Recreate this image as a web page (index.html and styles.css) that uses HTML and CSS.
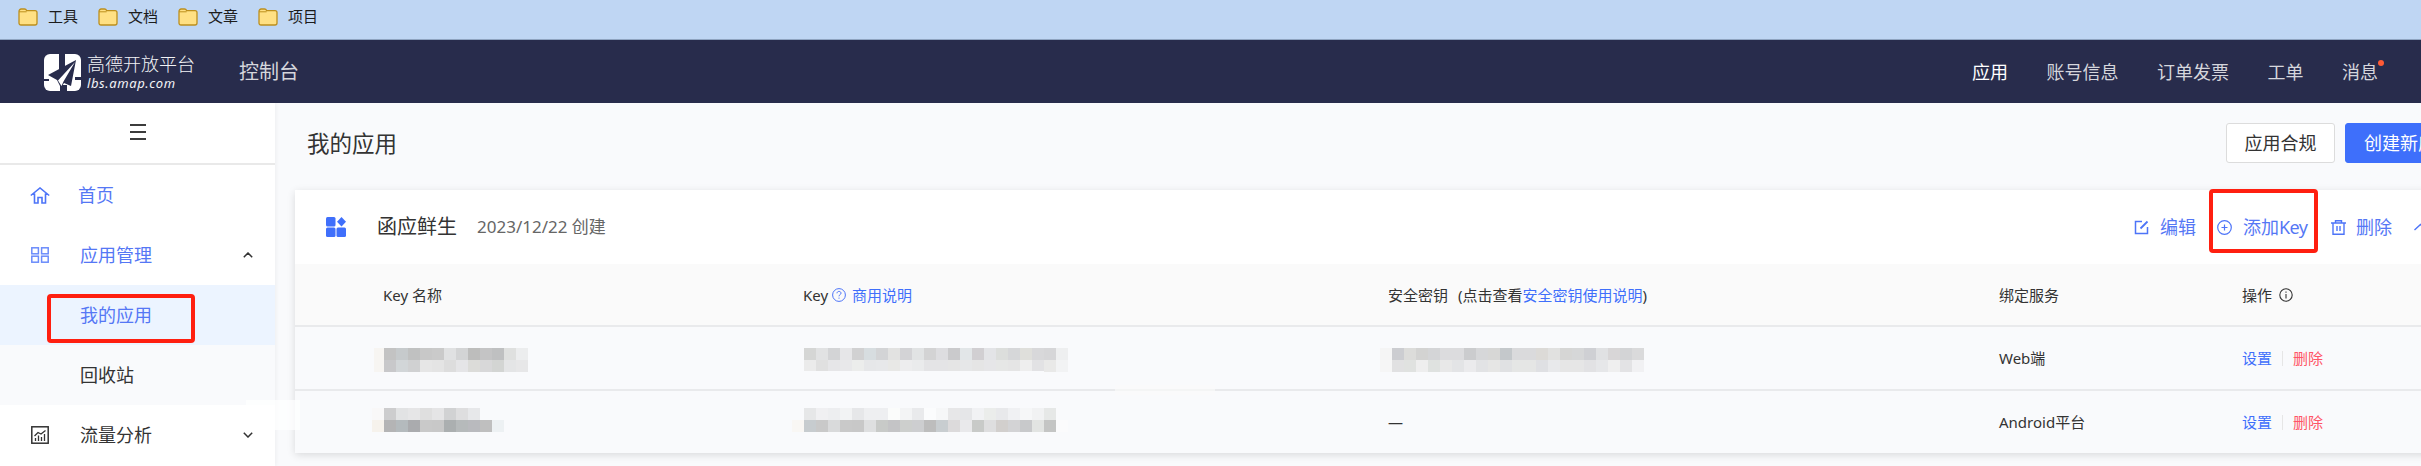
FILE: index.html
```html
<!DOCTYPE html>
<html lang="zh-CN">
<head>
<meta charset="utf-8">
<title>我的应用 - 高德开放平台</title>
<link rel="stylesheet" href="styles.css">
</head>
<body>
<div class="page">
  <div class="bookmarks">
    <a class="bm"><svg class="folder" viewBox="0 0 20 18"><path d="M1 3.5C1 2 2 1 3.2 1H6.5C7.6 1 8.2 1.6 8.6 2.6H17C18.2 2.6 19 3.4 19 4.6V15C19 16.2 18.2 17 17 17H3C1.8 17 1 16.2 1 15Z" fill="#ffe084" stroke="#bd8f1d" stroke-width="1.3"/><path d="M1 3.8H8.6" fill="none" stroke="#bd8f1d" stroke-width="1"/></svg><span class="bm-text">工具</span></a>
    <a class="bm"><svg class="folder" viewBox="0 0 20 18"><path d="M1 3.5C1 2 2 1 3.2 1H6.5C7.6 1 8.2 1.6 8.6 2.6H17C18.2 2.6 19 3.4 19 4.6V15C19 16.2 18.2 17 17 17H3C1.8 17 1 16.2 1 15Z" fill="#ffe084" stroke="#bd8f1d" stroke-width="1.3"/><path d="M1 3.8H8.6" fill="none" stroke="#bd8f1d" stroke-width="1"/></svg><span class="bm-text">文档</span></a>
    <a class="bm"><svg class="folder" viewBox="0 0 20 18"><path d="M1 3.5C1 2 2 1 3.2 1H6.5C7.6 1 8.2 1.6 8.6 2.6H17C18.2 2.6 19 3.4 19 4.6V15C19 16.2 18.2 17 17 17H3C1.8 17 1 16.2 1 15Z" fill="#ffe084" stroke="#bd8f1d" stroke-width="1.3"/><path d="M1 3.8H8.6" fill="none" stroke="#bd8f1d" stroke-width="1"/></svg><span class="bm-text">文章</span></a>
    <a class="bm"><svg class="folder" viewBox="0 0 20 18"><path d="M1 3.5C1 2 2 1 3.2 1H6.5C7.6 1 8.2 1.6 8.6 2.6H17C18.2 2.6 19 3.4 19 4.6V15C19 16.2 18.2 17 17 17H3C1.8 17 1 16.2 1 15Z" fill="#ffe084" stroke="#bd8f1d" stroke-width="1.3"/><path d="M1 3.8H8.6" fill="none" stroke="#bd8f1d" stroke-width="1"/></svg><span class="bm-text">项目</span></a>
  </div>

  <header class="topbar">
    <svg class="logo-mark" viewBox="0 0 37 37">
      <rect width="37" height="37" rx="6" fill="#fff"/>
      <rect x="15" y="0" width="6" height="15" fill="#282c4c"/>
      <rect x="31" y="23" width="6" height="3" fill="#282c4c"/>
      <rect x="0" y="25" width="5" height="2" fill="#282c4c"/>
      <rect x="16" y="31" width="7" height="6" fill="#282c4c"/>
      <path d="M32 6L4 21L13 26L17 34L20 29L27 32Z" fill="#282c4c"/>
      <path d="M31 8L14 26.500L17.500 32L19.500 27.500Z" fill="#fff"/>
    </svg>
    <div class="logo-text">
      <span class="logo-cn">高德开放平台</span>
      <span class="logo-en">lbs.amap.com</span>
    </div>
    <span class="console">控制台</span>
    <nav class="topnav">
      <a class="nav-on">应用</a>
      <a>账号信息</a>
      <a>订单发票</a>
      <a>工单</a>
      <a class="nav-msg">消息<i class="dot"></i></a>
    </nav>
  </header>

  <div class="body">
    <aside class="sidebar">
      <div class="burger"><span></span><span></span><span></span></div>
      <a class="mi mi-blue">
        <svg class="mi-ico home-ico" viewBox="0 0 20 17" fill="none" stroke="#4d74f8" stroke-width="1.600"><path d="M.8 8.500L10 1L19.200 8.500M4.500 6.500V16H8V10.500H12V16H15.500V6.500"/></svg>
        <span>首页</span>
      </a>
      <a class="mi mi-blue">
        <svg class="mi-ico" viewBox="0 0 18 16" fill="none" stroke="#6b8cfb" stroke-width="1.500"><rect x=".8" y=".8" width="6.600" height="6"/><rect x="10.600" y=".8" width="6.600" height="6"/><rect x=".8" y="9.200" width="6.600" height="6"/><rect x="10.600" y="9.200" width="6.600" height="6"/></svg>
        <span>应用管理</span>
        <svg class="chev" viewBox="0 0 10 6" fill="none" stroke="#333" stroke-width="1.500"><path d="M.8 5.200L5 1L9.200 5.200"/></svg>
      </a>
      <a class="mi sub sub-on"><span>我的应用</span></a>
      <a class="mi sub sub-off"><span>回收站</span></a>
      <a class="mi">
        <svg class="mi-ico" viewBox="0 0 18 18" fill="none" stroke="#333" stroke-width="1.500"><rect x=".8" y=".8" width="16.400" height="16.400"/><path d="M3.500 10L7 6.500L10 8L14.500 4.500M4.500 15V12M7.500 15V9.500M10.500 15V11M13.500 15V8" stroke-width="1.300"/></svg>
        <span>流量分析</span>
        <svg class="chev" viewBox="0 0 10 6" fill="none" stroke="#333" stroke-width="1.500"><path d="M.8 .8L5 5L9.200 .8"/></svg>
      </a>
    </aside>

    <main class="main">
      <div class="title-row">
        <h1 class="title">我的应用</h1>
        <div class="title-btns">
          <button class="btn">应用合规</button>
          <button class="btn btn-primary">创建新应用</button>
        </div>
      </div>

      <section class="card">
        <div class="card-head">
          <div class="head-left">
            <svg class="app-ico" viewBox="0 0 20 20" fill="#3f6ffb"><rect x="0" y="0" width="9.500" height="9.500" rx="1.500"/><path d="M15.500 0L20 4.750L15.500 9.500L11 4.750Z"/><rect x="0" y="10.500" width="9.500" height="9.500" rx="1.500"/><rect x="10.500" y="10.500" width="9.500" height="9.500" rx="1.500"/></svg>
            <span class="app-name">函应鲜生</span>
            <span class="app-date">2023/12/22 创建</span>
          </div>
          <div class="head-actions">
            <a class="act act-edit"><svg class="act-ico" viewBox="0 0 15 15" fill="none" stroke="#4d74f8" stroke-width="1.500"><path d="M8 1.500H1.500V13.500H13.500V7"/><path d="M6.500 8.500L13.500 1.500" stroke-width="1.800"/></svg>编辑</a>
            <a class="act act-add"><svg class="act-ico" viewBox="0 0 15 15" fill="none" stroke="#4d74f8" stroke-width="1.200"><circle cx="7.500" cy="7.500" r="6.800"/><path d="M7.500 4.500V10.500M4.500 7.500H10.500"/></svg><span class="add-text">添加<span class="add-key">Key</span></span></a>
            <a class="act act-del"><svg class="act-ico" viewBox="0 0 15 15" fill="none" stroke="#4d74f8" stroke-width="1.400"><path d="M0 3H15M4.500 3V.8H10.500V3M2 3V14.200H13V3M6 6V11M9 6V11"/></svg>删除</a>
            <a class="act act-fold"><svg class="act-ico" viewBox="0 0 15 15" fill="none" stroke="#4d74f8" stroke-width="1.400"><path d="M1.500 10L7.500 4.500L13.500 10"/></svg>收起</a>
          </div>
        </div>

        <div class="row row-head">
          <div>Key 名称</div>
          <div class="key-head">Key<svg class="help" viewBox="0 0 14 14" fill="none" stroke="#4d74f8" stroke-width="1"><circle cx="7" cy="7" r="6.400"/><path d="M5 5.300C5 4 6 3.400 7 3.400C8.100 3.400 9 4.100 9 5.200C9 6.700 7 6.600 7 8.300M7 9.600V10.700"/></svg><a class="link">商用说明</a></div>
          <div>安全密钥<span class="paren">(点击查看<a class="link">安全密钥使用说明</a>)</span></div>
          <div>绑定服务</div>
          <div class="op-head">操作<svg class="info" viewBox="0 0 14 14" fill="none" stroke="#333" stroke-width="1.100"><circle cx="7" cy="7" r="6.200"/><path d="M7 6V10.500M7 3.500V4.800"/></svg></div>
        </div>

        <div class="row">
          <div>
            <svg class="mosaic mos-a" width="154" height="24" viewBox="0 0 154 24">
              <rect x="0" y="0" width="10" height="12" fill="#f7f5f2"/><rect x="10" y="0" width="12" height="12" fill="#c3c3c3"/><rect x="22" y="0" width="12" height="12" fill="#c6cacc"/><rect x="34" y="0" width="12" height="12" fill="#c0c1c1"/><rect x="46" y="0" width="12" height="12" fill="#c8c8c8"/><rect x="58" y="0" width="12" height="12" fill="#cacaca"/><rect x="70" y="0" width="12" height="12" fill="#e0e1e2"/><rect x="82" y="0" width="12" height="12" fill="#d3d4d5"/><rect x="94" y="0" width="12" height="12" fill="#bdbdbc"/><rect x="106" y="0" width="12" height="12" fill="#c4c4c5"/><rect x="118" y="0" width="12" height="12" fill="#bfc0c1"/><rect x="130" y="0" width="12" height="12" fill="#dfe0df"/><rect x="142" y="0" width="12" height="12" fill="#ecedee"/>
              <rect x="0" y="12" width="10" height="12" fill="#f7f5f2"/><rect x="10" y="12" width="12" height="12" fill="#c8c8ca"/><rect x="22" y="12" width="12" height="12" fill="#d2d6d8"/><rect x="34" y="12" width="12" height="12" fill="#d0d1d2"/><rect x="46" y="12" width="12" height="12" fill="#e6e6e6"/><rect x="58" y="12" width="12" height="12" fill="#e4e4e4"/><rect x="70" y="12" width="12" height="12" fill="#dddddd"/><rect x="82" y="12" width="12" height="12" fill="#e5e5e7"/><rect x="94" y="12" width="12" height="12" fill="#dcdcd9"/><rect x="106" y="12" width="12" height="12" fill="#d8d8d9"/><rect x="118" y="12" width="12" height="12" fill="#d3d5d3"/><rect x="130" y="12" width="12" height="12" fill="#e4e5e6"/><rect x="142" y="12" width="12" height="12" fill="#e7e7e8"/>
            </svg>
          </div>
          <div>
            <svg class="mosaic mos-b" width="264" height="24" viewBox="0 0 264 24">
              <rect x="0" y="0" width="12" height="12" fill="#d5d6d5"/><rect x="12" y="0" width="12" height="12" fill="#e1e2e3"/><rect x="24" y="0" width="12" height="12" fill="#d3d4d6"/><rect x="36" y="0" width="12" height="12" fill="#e6e6e8"/><rect x="48" y="0" width="12" height="12" fill="#d1d1d2"/><rect x="60" y="0" width="12" height="12" fill="#d7dde0"/><rect x="72" y="0" width="12" height="12" fill="#d3d4d6"/><rect x="84" y="0" width="12" height="12" fill="#e2e2e1"/><rect x="96" y="0" width="12" height="12" fill="#d3d3d6"/><rect x="108" y="0" width="12" height="12" fill="#e1e3e4"/><rect x="120" y="0" width="12" height="12" fill="#d3d3d4"/><rect x="132" y="0" width="12" height="12" fill="#dddde0"/><rect x="144" y="0" width="12" height="12" fill="#cacacc"/><rect x="156" y="0" width="12" height="12" fill="#e2e6e8"/><rect x="168" y="0" width="12" height="12" fill="#d1cfd2"/><rect x="180" y="0" width="12" height="12" fill="#e3e4e7"/><rect x="192" y="0" width="12" height="12" fill="#dcdedc"/><rect x="204" y="0" width="12" height="12" fill="#d6d7d9"/><rect x="216" y="0" width="12" height="12" fill="#dfdfdb"/><rect x="228" y="0" width="12" height="12" fill="#d8d8da"/><rect x="240" y="0" width="12" height="12" fill="#d6d6d8"/><rect x="252" y="0" width="12" height="12" fill="#eeeff0"/>
              <rect x="0" y="12" width="12" height="11" fill="#ebebeb"/><rect x="12" y="12" width="12" height="11" fill="#e0e0e0"/><rect x="24" y="12" width="12" height="11" fill="#e6e6e8"/><rect x="36" y="12" width="12" height="11" fill="#e8e8ea"/><rect x="48" y="12" width="12" height="11" fill="#ecedec"/><rect x="60" y="12" width="12" height="11" fill="#e6e7e9"/><rect x="72" y="12" width="12" height="11" fill="#e7e8ea"/><rect x="84" y="12" width="12" height="11" fill="#e8e8e6"/><rect x="96" y="12" width="12" height="11" fill="#ededee"/><rect x="108" y="12" width="12" height="11" fill="#eaebec"/><rect x="120" y="12" width="12" height="11" fill="#e4e4e6"/><rect x="132" y="12" width="12" height="11" fill="#e4e4e6"/><rect x="144" y="12" width="12" height="11" fill="#e5e5e5"/><rect x="156" y="12" width="12" height="11" fill="#e6e7e8"/><rect x="168" y="12" width="12" height="11" fill="#e5e5e5"/><rect x="180" y="12" width="12" height="11" fill="#e6e6e8"/><rect x="192" y="12" width="12" height="11" fill="#e6e7e6"/><rect x="204" y="12" width="12" height="11" fill="#e5e5e5"/><rect x="216" y="12" width="12" height="11" fill="#eeeeee"/><rect x="228" y="12" width="12" height="11" fill="#e2e2e4"/><rect x="240" y="12" width="12" height="12" fill="#e9e9e8"/><rect x="252" y="12" width="12" height="12" fill="#f2f3f4"/>
            </svg>
          </div>
          <div>
            <svg class="mosaic mos-c" width="264" height="24" viewBox="0 0 264 24">
              <rect x="0" y="0" width="12" height="12" fill="#f5f5f5"/><rect x="12" y="0" width="12" height="12" fill="#cccdd1"/><rect x="24" y="0" width="12" height="12" fill="#dcdcda"/><rect x="36" y="0" width="12" height="12" fill="#d3d3d2"/><rect x="48" y="0" width="12" height="12" fill="#d4d5d7"/><rect x="60" y="0" width="12" height="12" fill="#dcdcde"/><rect x="72" y="0" width="12" height="12" fill="#dcdcde"/><rect x="84" y="0" width="12" height="12" fill="#cbccce"/><rect x="96" y="0" width="12" height="12" fill="#d6d7d9"/><rect x="108" y="0" width="12" height="12" fill="#d7d7d6"/><rect x="120" y="0" width="12" height="12" fill="#c4c8cb"/><rect x="132" y="0" width="12" height="12" fill="#dadadc"/><rect x="144" y="0" width="12" height="12" fill="#dadadc"/><rect x="156" y="0" width="12" height="12" fill="#dcdad7"/><rect x="168" y="0" width="12" height="12" fill="#e1e1e0"/><rect x="180" y="0" width="12" height="12" fill="#d6d6d5"/><rect x="192" y="0" width="12" height="12" fill="#d6d7d8"/><rect x="204" y="0" width="12" height="12" fill="#cfd0d4"/><rect x="216" y="0" width="12" height="12" fill="#e0e1e3"/><rect x="228" y="0" width="12" height="12" fill="#d8d6d7"/><rect x="240" y="0" width="12" height="12" fill="#d3d4d6"/><rect x="252" y="0" width="12" height="12" fill="#dadadb"/>
              <rect x="0" y="12" width="12" height="12" fill="#f6f6f6"/><rect x="12" y="12" width="12" height="12" fill="#e1e1e2"/><rect x="24" y="12" width="12" height="12" fill="#e0e2e0"/><rect x="36" y="12" width="12" height="12" fill="#eeeeee"/><rect x="48" y="12" width="12" height="12" fill="#dfe2e0"/><rect x="60" y="12" width="12" height="12" fill="#e8e8e8"/><rect x="72" y="12" width="12" height="12" fill="#e3e4e6"/><rect x="84" y="12" width="12" height="12" fill="#ebebed"/><rect x="96" y="12" width="12" height="12" fill="#e2e3e5"/><rect x="108" y="12" width="12" height="12" fill="#e6e6e5"/><rect x="120" y="12" width="12" height="12" fill="#e0e1e3"/><rect x="132" y="12" width="12" height="12" fill="#e5e6e5"/><rect x="144" y="12" width="12" height="12" fill="#e5e6e5"/><rect x="156" y="12" width="12" height="12" fill="#dfe0e3"/><rect x="168" y="12" width="12" height="12" fill="#e8e9eb"/><rect x="180" y="12" width="12" height="12" fill="#e6e6e6"/><rect x="192" y="12" width="12" height="12" fill="#e6e6e6"/><rect x="204" y="12" width="12" height="12" fill="#e2e2e4"/><rect x="216" y="12" width="12" height="12" fill="#e6e7e9"/><rect x="228" y="12" width="12" height="12" fill="#efefef"/><rect x="240" y="12" width="12" height="12" fill="#e3e3e5"/><rect x="252" y="12" width="12" height="12" fill="#f1f1f3"/>
            </svg>
          </div>
          <div>Web端</div>
          <div class="ops"><a class="link">设置</a><i class="op-sep"></i><a class="danger">删除</a></div>
        </div>

        <div class="row row-last">
          <div>
            <svg class="mosaic mos-d" width="132" height="24" viewBox="0 0 132 24">
              <rect x="0" y="0" width="12" height="12" fill="#f9f8f8"/><rect x="12" y="0" width="12" height="12" fill="#cdcdce"/><rect x="24" y="0" width="12" height="12" fill="#e2e3e4"/><rect x="36" y="0" width="12" height="12" fill="#e6e6e7"/><rect x="48" y="0" width="12" height="12" fill="#dfdfdf"/><rect x="60" y="0" width="12" height="12" fill="#e5e5e6"/><rect x="72" y="0" width="12" height="12" fill="#d1d2d3"/><rect x="84" y="0" width="12" height="12" fill="#dededf"/><rect x="96" y="0" width="12" height="12" fill="#e7e8ea"/>
              <rect x="0" y="12" width="12" height="12" fill="#f6f2ec"/><rect x="12" y="12" width="12" height="12" fill="#b4b4b5"/><rect x="24" y="12" width="12" height="12" fill="#b4babd"/><rect x="36" y="12" width="12" height="12" fill="#aaabae"/><rect x="48" y="12" width="12" height="12" fill="#c9c9c9"/><rect x="60" y="12" width="12" height="12" fill="#c8c8c8"/><rect x="72" y="12" width="12" height="12" fill="#abafb0"/><rect x="84" y="12" width="12" height="12" fill="#b6babb"/><rect x="96" y="12" width="12" height="12" fill="#b9babe"/><rect x="108" y="12" width="12" height="12" fill="#bfbfbf"/><rect x="120" y="12" width="12" height="12" fill="#edf1f3"/>
            </svg>
          </div>
          <div>
            <svg class="mosaic mos-e" width="288" height="24" viewBox="0 0 288 24">
              <rect x="12" y="0" width="12" height="12" fill="#e6e7e8"/><rect x="24" y="0" width="12" height="12" fill="#f0f0f2"/><rect x="36" y="0" width="12" height="12" fill="#edeef0"/><rect x="48" y="0" width="12" height="12" fill="#f2f3f4"/><rect x="60" y="0" width="12" height="12" fill="#e6e7e9"/><rect x="72" y="0" width="12" height="12" fill="#eeeff1"/><rect x="84" y="0" width="12" height="12" fill="#eeeff1"/><rect x="96" y="0" width="12" height="12" fill="#fbfcfb"/><rect x="108" y="0" width="12" height="12" fill="#f3f4f5"/><rect x="120" y="0" width="12" height="12" fill="#e9eaec"/><rect x="132" y="0" width="12" height="12" fill="#fbfcfd"/><rect x="144" y="0" width="12" height="12" fill="#f6f7f8"/><rect x="156" y="0" width="12" height="12" fill="#e7e7e8"/><rect x="168" y="0" width="12" height="12" fill="#e5e6e8"/><rect x="180" y="0" width="12" height="12" fill="#f1f2f4"/><rect x="192" y="0" width="12" height="12" fill="#ebedeb"/><rect x="204" y="0" width="12" height="12" fill="#e8e9eb"/><rect x="216" y="0" width="12" height="12" fill="#f0f1f3"/><rect x="228" y="0" width="12" height="12" fill="#f6f7f8"/><rect x="240" y="0" width="12" height="12" fill="#f1f2f3"/><rect x="252" y="0" width="12" height="12" fill="#e6e8e7"/>
              <rect x="0" y="12" width="12" height="12" fill="#f9f7f4"/><rect x="12" y="12" width="12" height="12" fill="#c7cccf"/><rect x="24" y="12" width="12" height="12" fill="#c9c9c9"/><rect x="36" y="12" width="12" height="12" fill="#d9dadb"/><rect x="48" y="12" width="12" height="12" fill="#c9c9c9"/><rect x="60" y="12" width="12" height="12" fill="#c8c8c8"/><rect x="72" y="12" width="12" height="12" fill="#dedfe0"/><rect x="84" y="12" width="12" height="12" fill="#c8cac8"/><rect x="96" y="12" width="12" height="12" fill="#c4c4c6"/><rect x="108" y="12" width="12" height="12" fill="#cdcfcd"/><rect x="120" y="12" width="12" height="12" fill="#cdced0"/><rect x="132" y="12" width="12" height="12" fill="#bdbdbd"/><rect x="144" y="12" width="12" height="12" fill="#c8cdd0"/><rect x="156" y="12" width="12" height="12" fill="#dcdadb"/><rect x="168" y="12" width="12" height="12" fill="#e9e9eb"/><rect x="180" y="12" width="12" height="12" fill="#c8cac8"/><rect x="192" y="12" width="12" height="12" fill="#dededf"/><rect x="204" y="12" width="12" height="12" fill="#d2cfcd"/><rect x="216" y="12" width="12" height="12" fill="#d3d3d5"/><rect x="228" y="12" width="12" height="12" fill="#c8c9cb"/><rect x="240" y="12" width="12" height="12" fill="#e2e4e2"/><rect x="252" y="12" width="12" height="12" fill="#c4c5c4"/><rect x="264" y="12" width="12" height="12" fill="#fbfbfc"/>
            </svg>
          </div>
          <div>—</div>
          <div>Android平台</div>
          <div class="ops"><a class="link">设置</a><i class="op-sep"></i><a class="danger">删除</a></div>
        </div>
      </section>
    </main>
  </div>

  <i class="smudge smudge-a"></i>
  <i class="smudge smudge-b"></i>
  <i class="mark mark-a"></i>
  <i class="mark mark-b"></i>
</div>
</body>
</html>
```

FILE: styles.css
```css
* { box-sizing: border-box; }
html, body { margin: 0; padding: 0; background: #f9fafc; }
body {
  font-family: "Noto Sans", "Noto Sans CJK SC", sans-serif;
  color: #333;
  overflow: hidden;
}
a { color: inherit; text-decoration: none; }
i { font-style: normal; display: block; }

.page {
  position: relative;
  width: 2421px;
  height: 466px;
  overflow: hidden;
  display: flex;
  flex-direction: column;
}

/* browser bookmarks */
.bookmarks {
  flex: none;
  height: 40px;
  padding: 8px 0 0 18px;
  display: flex;
  background: #bfd6f3;
  border-bottom: 1px solid #8fa4c0;
}
.bm {
  width: 80px;
  height: 18px;
  display: flex;
  align-items: center;
  gap: 10px;
  font-size: 15px;
  line-height: 18px;
  color: #1c1c1c;
}
.bm-text { margin-bottom: 2px; }
.folder { width: 20px; height: 18px; flex: none; }

/* top bar */
.topbar {
  flex: none;
  height: 63px;
  padding-left: 44px;
  display: flex;
  align-items: center;
  background: #282c4c;
}
.logo-mark { width: 37px; height: 37px; flex: none; margin-top: 1px; }
.logo-text {
  display: flex;
  flex-direction: column;
  margin-left: 6px;
  width: 152px;
  color: #f2f3f6;
}
.logo-cn { font-size: 18px; line-height: 22px; font-weight: 300; }
.logo-en { font-size: 13px; line-height: 14px; font-style: italic; letter-spacing: .6px; margin-top: 1px; }
.console { font-size: 20px; line-height: 28px; color: #d5d6dc; }
.topnav {
  margin-left: auto;
  padding-right: 43px;
  display: flex;
  gap: 38.500px;
  font-size: 18px;
  line-height: 26px;
  color: #d5d6dc;
}
.nav-on { color: #fff; }
.nav-msg { position: relative; }
.dot {
  position: absolute;
  left: 36px;
  top: 1px;
  width: 6px;
  height: 6px;
  border-radius: 50%;
  background: #ff5a35;
}

/* layout */
.body { flex: 1; display: flex; min-height: 0; }

.sidebar {
  flex: none;
  width: 275px;
  background: #fff;
  box-shadow: 1px 0 4px rgba(0, 0, 0, .05);
  position: relative;
}
.burger {
  height: 62px;
  border-bottom: 2px solid #e9e9e9;
  display: flex;
  flex-direction: column;
  align-items: center;
  justify-content: center;
  gap: 5px;
  padding-bottom: 3px;
}
.burger span { width: 16px; height: 2px; background: #3c3c3c; }

.mi {
  position: relative;
  height: 60px;
  display: flex;
  align-items: center;
  padding-left: 31px;
  font-size: 18px;
  line-height: 26px;
  color: #333;
}
.mi-ico { width: 18px; height: 18px; flex: none; margin-right: 31px; }
.home-ico { width: 20px; height: 17px; margin: 0 28px 0 -1px; }
.mi-blue { color: #5577f5; }
.chev { position: absolute; left: 243px; top: 27px; width: 10px; height: 6px; }
.sub { padding-left: 80px; }
.sub-on { background: #ecf4ff; color: #5577f5; }
.sub-off { background: #f9fafc; }

/* main */
.main { flex: 1; min-width: 0; padding: 20px 0 0 20px; }
.title-row { display: flex; align-items: center; height: 40px; padding-left: 12px; }
.title {
  margin: 2px 0 0;
  flex: 0 0 1919px;
  font-size: 22.500px;
  line-height: 32px;
  font-weight: 400;
  color: #333;
}
.title-btns { display: flex; gap: 10px; flex: none; }
.btn {
  height: 40px;
  width: 109px;
  padding: 0;
  flex: none;
  font: inherit;
  font-size: 18px;
  line-height: 26px;
  color: #333;
  background: #fff;
  border: 1px solid #dcdcdc;
  border-radius: 3px;
}
.btn-primary { width: 128px; color: #fff; background: #3e6ffb; border-color: #3e6ffb; }

.card {
  margin-top: 27px;
  width: 2200px;
  background: #f9fafc;
  box-shadow: 0 2px 8px rgba(0, 0, 0, .13);
}
.card-head {
  height: 74px;
  display: flex;
  align-items: center;
  padding-left: 31px;
  background: #fff;
}
.head-left { flex: 0 0 1808px; display: flex; align-items: center; }
.app-ico { width: 20px; height: 20px; flex: none; }
.app-name { margin-left: 31px; font-size: 20px; line-height: 28px; color: #333; }
.app-date { margin-left: 20px; font-size: 17px; line-height: 24px; color: #666; }
.head-actions { display: flex; align-items: center; font-size: 18px; line-height: 26px; color: #5577f5; }
.act { display: flex; align-items: center; gap: 11px; flex: none; white-space: nowrap; }
.act-edit { width: 83px; }
.act-add { width: 114px; }
.act-del { width: 82px; gap: 10px; }
.add-key { letter-spacing: -.6px; }
.act-ico { width: 15px; height: 15px; flex: none; }

.row {
  height: 64px;
  padding-left: 88px;
  display: grid;
  grid-template-columns: 420px 585px 611px 243px 1fr;
  align-items: center;
  font-size: 15px;
  line-height: 22px;
  color: #333;
  border-bottom: 2px solid #e9eaec;
}
.row-head { height: 63px; background: #fafafa; }
.row-last { height: 62px; border-bottom: 0; }
.link { color: #3f6ffb; }
.danger { color: #ff5566; }
.key-head { display: flex; align-items: center; }
.help { width: 14px; height: 14px; margin: 0 6px 0 4px; flex: none; }
.paren { margin-left: 10px; }
.op-head { display: flex; align-items: center; gap: 7px; }
.info { width: 14px; height: 14px; flex: none; }
.ops { display: flex; align-items: center; }
.op-sep { width: 1px; height: 15px; margin: 0 10px; background: #e6e6e6; }
.mosaic { display: block; }
.mos-a { margin: 4px 0 0 -9px; }
.mos-b { margin: 4px 0 0 1px; }
.mos-c { margin: 4px 0 0 -8px; }
.mos-d { margin: 0 0 4px -11px; }
.mos-e { margin: 0 0 4px -11px; }

/* overlays */
.smudge { position: absolute; pointer-events: none; }
.smudge-a { left: 246px; top: 400px; width: 54px; height: 30px; background: rgba(255, 255, 255, .7); }
.smudge-b { left: 1115px; top: 385px; width: 100px; height: 10px; background: rgba(250, 250, 251, .65); }
.mark { position: absolute; border: 4px solid #ff1f10; border-radius: 4px; pointer-events: none; }
.mark-a { left: 47px; top: 294px; width: 148px; height: 49px; }
.mark-b { left: 2209px; top: 189px; width: 109px; height: 64px; }
```
